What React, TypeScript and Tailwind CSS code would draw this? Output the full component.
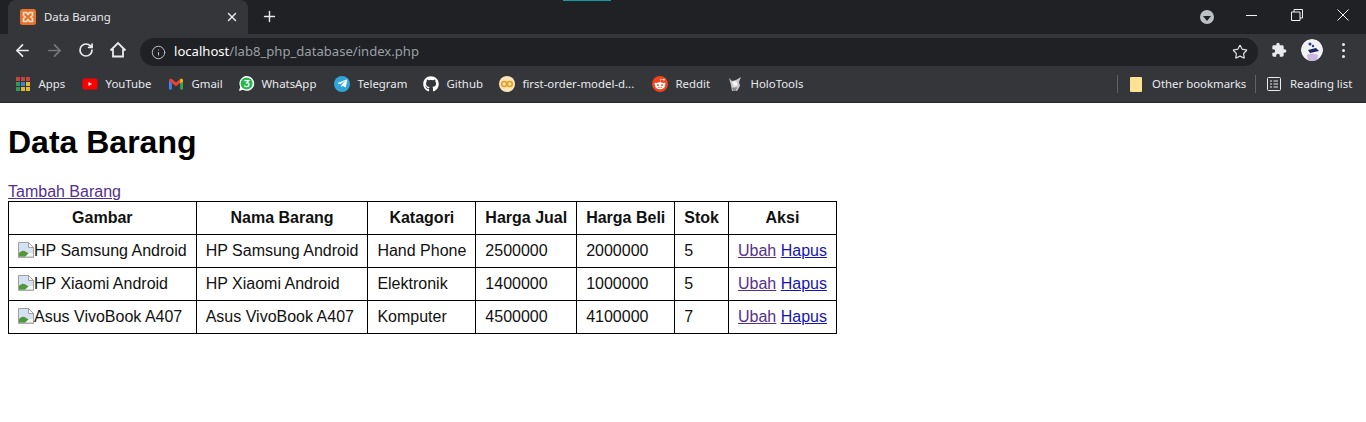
import { ArrowLeft, ArrowRight, Info, Plus, RotateCw, Star, X } from 'lucide-react';
import type { ReactNode } from 'react';
import { FaGithub, FaRedditAlien, FaTelegramPlane } from 'react-icons/fa';

const rows = [
  { name: 'HP Samsung Android', cat: 'Hand Phone', jual: '2500000', beli: '2000000', stok: '5' },
  { name: 'HP Xiaomi Android', cat: 'Elektronik', jual: '1400000', beli: '1000000', stok: '5' },
  { name: 'Asus VivoBook A407', cat: 'Komputer', jual: '4500000', beli: '4100000', stok: '7' },
];

const headers = ['Gambar', 'Nama Barang', 'Katagori', 'Harga Jual', 'Harga Beli', 'Stok', 'Aksi'];

function BrokenImage() {
  return (
    <svg width="16" height="16" viewBox="0 0 16 16" className="inline-block align-[-2px]">
      <path d="M0.5 0.5H10.5L15.5 5.5V15.5H0.5Z" fill="#d5e0f2" stroke="#a0a0a0" />
      <path d="M10.5 0.5V5.5H15.5Z" fill="#ffffff" stroke="#a0a0a0" />
      <path d="M1 15V11C3.5 8.5 5.5 8 7.5 9.5C9 10.5 10 11 11 11L7 15Z" fill="#4f9a38" />
      <path d="M7 15L11 11H15V15Z" fill="#f4f4f4" />
      <path d="M1 15H15" stroke="#b5b5b5" />
    </svg>
  );
}

function XamppIcon() {
  return (
    <svg width="16" height="16" viewBox="0 0 16 16" className="shrink-0">
      <rect width="16" height="16" rx="2.5" fill="#e8722c" />
      <path
        d="M3.5 3.5H6.5L8 5.5L9.5 3.5H12.5V6.5L10.8 8L12.5 9.5V12.5H9.5L8 10.5L6.5 12.5H3.5V9.5L5.2 8L3.5 6.5Z"
        fill="none"
        stroke="#fbe3d0"
        strokeWidth="1.6"
      />
    </svg>
  );
}

function AppsIcon() {
  const colors = ['#c5443c', '#c5443c', '#c5443c', '#2f9a5c', '#3b82d9', '#e5b72f', '#2f9a5c', '#e5b72f', '#e5b72f'];
  return (
    <div className="grid w-[14px] shrink-0 grid-cols-3 gap-px">
      {colors.map((c, i) => (
        <div key={i} className="h-[4px] w-[4px]" style={{ backgroundColor: c }} />
      ))}
    </div>
  );
}

function YoutubeIcon() {
  return (
    <svg width="16" height="12" viewBox="0 0 16 12" className="shrink-0">
      <rect width="15" height="11" x="0.5" y="0.5" rx="2.5" fill="#f00" />
      <path d="M6.5 4L10 6L6.5 8Z" fill="#fff" />
    </svg>
  );
}

function GmailIcon() {
  return (
    <svg width="16" height="16" viewBox="0 0 16 16" className="shrink-0">
      <path d="M1 4V13.5H3.8V7L1 4Z" fill="#4285f4" />
      <path d="M15 4V13.5H12.2V7L15 4Z" fill="#34a853" />
      <path d="M1 4.2C1 2.8 2.5 2.2 3.8 3L8 6.6L12.2 3V7L8 10.2L3.8 7Z" fill="#ea4335" />
      <path d="M12.2 3C13.5 2.2 15 2.8 15 4.2V5.5L12.2 7.5Z" fill="#fbbc04" />
    </svg>
  );
}

function WhatsappIcon() {
  return (
    <svg width="17" height="17" viewBox="0 0 17 17" className="shrink-0">
      <path d="M1 16L2.2 11.8A7.4 7.4 0 1 1 5 14.8Z" fill="#fff" />
      <circle cx="8.6" cy="8.4" r="6" fill="#25b94f" />
      <path
        d="M6.4 5.6H10.6L8.8 7.8C10.6 7.8 11 9 11 9.6C11 11 9.8 11.6 8.6 11.6C7.6 11.6 6.8 11.2 6.2 10.6"
        fill="none"
        stroke="#fff"
        strokeWidth="1.3"
      />
    </svg>
  );
}

function ColabIcon() {
  return (
    <svg width="16" height="16" viewBox="0 0 16 16" className="shrink-0">
      <circle cx="8" cy="8" r="8" fill="#fbe6ba" />
      <circle cx="5.2" cy="8" r="2.5" fill="none" stroke="#ea9a1c" strokeWidth="1.6" />
      <circle cx="10.8" cy="8" r="2.5" fill="none" stroke="#ea9a1c" strokeWidth="1.6" />
    </svg>
  );
}

function HoloIcon() {
  return (
    <svg width="16" height="16" viewBox="0 0 16 16" className="shrink-0">
      <path d="M2 2L5 5L9 4L14 1L12 6L13 10L10 15H5L4 9Z" fill="#c9c9c9" />
      <path d="M5 6L9 5L11 9L7 11Z" fill="#f2f2f2" />
      <path d="M5 12L10 11L9 15H6Z" fill="#8b8b8b" />
    </svg>
  );
}

function Bookmark({ w, icon, label }: { w: string; icon: ReactNode; label: string }) {
  return (
    <div className={`flex items-center gap-[7.5px] pl-2 whitespace-nowrap ${w}`}>
      <div className="flex w-4 shrink-0 items-center justify-center">{icon}</div>
      <span>{label}</span>
    </div>
  );
}

function Avatar() {
  return (
    <svg width="22" height="22" viewBox="0 0 22 22" className="rounded-full">
      <circle cx="11" cy="11" r="11" fill="#f1f1f4" />
      <path d="M6 16C9 14 13 14 17 16L16 22H7Z" fill="#c9b8e0" />
      <path d="M7 11L15 9L18 12L9 14Z" fill="#1c2466" />
      <circle cx="9" cy="5" r="1.5" fill="#2a3a86" />
      <circle cx="12" cy="7" r="1.2" fill="#2a3a86" />
    </svg>
  );
}

export default function App() {
  return (
    <div className="relative min-h-screen bg-white">
      <div className="font-['Noto_Sans',sans-serif] text-[11.4px] text-[#e8eaed]">
        {/* tab strip */}
        <div className="relative flex h-[34px] items-end bg-[#202124]">
          <div className="absolute top-0 left-[563px] h-px w-12 bg-[#0f9d9d]" />
          <div className="ml-2 flex h-[34px] w-[240px] items-center rounded-t-lg bg-[#35363a] pl-3 pr-[9px]">
            <XamppIcon />
            <span className="ml-2 flex-1 text-[#e8eaed]">Data Barang</span>
            <X size={14} strokeWidth={2.4} />
          </div>
          <Plus size={17} strokeWidth={2} className="mb-[9px] ml-[13px] text-[#e8eaed]" />
          <div className="flex-1" />
          <div className="mb-[10px] mr-[14px] flex h-[14px] w-[14px] items-center justify-center rounded-full bg-[#bdc1c6]">
            <div className="mt-0.5 border-x-[4px] border-t-[5px] border-x-transparent border-t-[#202124]" />
          </div>
          <div className="flex h-[34px] w-[46px] items-center justify-center pb-[4px]">
            <svg width="11" height="11" viewBox="0 0 11 11" stroke="#f1f3f4">
              <path d="M0 5.5H11" />
            </svg>
          </div>
          <div className="flex h-[34px] w-[46px] items-center justify-center pb-[4px]">
            <svg width="12" height="12" viewBox="0 0 12 12" fill="none" stroke="#f1f3f4">
              <path d="M0.5 3H9V11.5H0.5Z" />
              <path d="M3 3V0.5H11.5V9H9" />
            </svg>
          </div>
          <div className="flex h-[34px] w-[46px] items-center justify-center pb-[4px]">
            <svg width="12" height="12" viewBox="0 0 12 12" fill="none" stroke="#f1f3f4">
              <path d="M0.5 0.5L11.5 11.5M11.5 0.5L0.5 11.5" />
            </svg>
          </div>
        </div>

        {/* toolbar */}
        <div className="flex h-[32px] items-center bg-[#35363a] pl-[6px]">
          <div className="flex w-8 justify-center"><ArrowLeft size={19} strokeWidth={2.2} /></div>
          <div className="flex w-8 justify-center text-[#75787c]"><ArrowRight size={19} strokeWidth={2.2} /></div>
          <div className="flex w-8 justify-center"><RotateCw size={16} strokeWidth={2.6} /></div>
          <div className="flex w-8 justify-center">
            <svg width="18" height="18" viewBox="0 0 18 18" fill="none" stroke="#e8eaed" strokeWidth="1.8">
              <path d="M1.5 9.5L9 2L16.5 9.5M4 8V15.5H14V8" />
            </svg>
          </div>
          <div className="mt-[4px] ml-[6px] flex h-[28px] w-[1118px] items-center rounded-full bg-[#202124] pl-[11px] pr-[10px]">
            <Info size={15} strokeWidth={1.6} className="text-[#bdc1c6]" />
            <div className="ml-[8px] flex-1 text-[13.1px]">
              <span className="text-white">localhost</span>
              <span className="text-[#9aa0a6]">/lab8_php_database/index.php</span>
            </div>
            <Star size={16} strokeWidth={1.8} className="text-[#dadce0]" />
          </div>
          <div className="ml-[13px] flex w-4 justify-center">
            <svg width="16" height="16" viewBox="0 0 24 24" fill="#e8eaed">
              <path d="M20.5 11H19V7c0-1.1-.9-2-2-2h-4V3.5C13 2.12 11.88 1 10.5 1S8 2.12 8 3.5V5H4c-1.1 0-1.99.9-1.99 2v3.8H3.5c1.49 0 2.7 1.21 2.7 2.7s-1.21 2.7-2.7 2.7H2V20c0 1.1.9 2 2 2h3.8v-1.5c0-1.49 1.21-2.7 2.7-2.7 1.49 0 2.7 1.21 2.7 2.7V22H17c1.1 0 2-.9 2-2v-4h1.5c1.38 0 2.5-1.12 2.5-2.5S21.88 11 20.5 11z" />
            </svg>
          </div>
          <div className="ml-[14px]"><Avatar /></div>
          <div className="ml-[19px] flex flex-col gap-[3px]">
            <div className="h-[3px] w-[3px] rounded-full bg-[#e8eaed]" />
            <div className="h-[3px] w-[3px] rounded-full bg-[#e8eaed]" />
            <div className="h-[3px] w-[3px] rounded-full bg-[#e8eaed]" />
          </div>
        </div>

        {/* bookmarks bar */}
        <div className="flex h-[37px] items-center border-b border-[#26272a] bg-[#35363a] pl-[7px]">
          <Bookmark w="w-[67px]" icon={<AppsIcon />} label="Apps" />
          <Bookmark w="w-[86px]" icon={<YoutubeIcon />} label="YouTube" />
          <Bookmark w="w-[70px]" icon={<GmailIcon />} label="Gmail" />
          <Bookmark w="w-[96px]" icon={<WhatsappIcon />} label="WhatsApp" />
          <Bookmark
            w="w-[89px]"
            icon={
              <div className="flex h-4 w-4 items-center justify-center rounded-full bg-[#2fa5dc]">
                <FaTelegramPlane size={11} className="text-white" />
              </div>
            }
            label="Telegram"
          />
          <Bookmark w="w-[76px]" icon={<FaGithub size={16} className="text-white" />} label="Github" />
          <Bookmark w="w-[153px]" icon={<ColabIcon />} label="first-order-model-d..." />
          <Bookmark
            w="w-[75px]"
            icon={
              <div className="flex h-4 w-4 items-center justify-center rounded-full bg-[#f0431e]">
                <FaRedditAlien size={12} className="text-white" />
              </div>
            }
            label="Reddit"
          />
          <Bookmark w="w-[93px]" icon={<HoloIcon />} label="HoloTools" />
          <div className="flex-1" />
          <div className="h-[18px] w-px bg-[#5f6368]" />
          <div className="ml-[12px] h-[15px] w-[12px] rounded-[1px] bg-[#fde293]" />
          <span className="ml-[10px] w-[93px] whitespace-nowrap">Other bookmarks</span>
          <div className="ml-[10px] h-[18px] w-px bg-[#5f6368]" />
          <svg width="14" height="14" viewBox="0 0 14 14" fill="none" stroke="#e8eaed" className="ml-[11px]">
            <rect x="0.5" y="0.5" width="13" height="13" rx="1" />
            <path d="M3 4H5M3 7H5M3 10H5M6.5 4H11M6.5 7H11M6.5 10H11" />
          </svg>
          <span className="mr-[15px] ml-[9px] w-[61px] whitespace-nowrap">Reading list</span>
        </div>
      </div>

      {/* page content */}
      <div className="px-2 font-['Liberation_Sans',sans-serif] text-base text-[#111]">
        <h1 className="pt-[21px] pb-[22px] text-[32px] leading-[37px] font-bold text-black">Data Barang</h1>
        <a className="block leading-[18px] text-[#55308d] underline" href="#tambah">Tambah Barang</a>
        <table className="border-collapse border border-black leading-[18px]">
          <thead>
            <tr>
              {headers.map((h) => (
                <th key={h} className="border border-black px-[9px] py-[7px] text-center font-bold">{h}</th>
              ))}
            </tr>
          </thead>
          <tbody>
            {rows.map((r) => (
              <tr key={r.name}>
                <td className="border border-black px-[9px] py-[7px] whitespace-nowrap">
                  <BrokenImage />
                  {r.name}
                </td>
                <td className="border border-black px-[9px] py-[7px] whitespace-nowrap">{r.name}</td>
                <td className="border border-black px-[9px] py-[7px] whitespace-nowrap">{r.cat}</td>
                <td className="border border-black px-[9px] py-[7px]">{r.jual}</td>
                <td className="border border-black px-[9px] py-[7px]">{r.beli}</td>
                <td className="border border-black px-[9px] py-[7px]">{r.stok}</td>
                <td className="border border-black px-[9px] py-[7px] whitespace-nowrap">
                  <a className="text-[#55308d] underline" href="#ubah">Ubah</a>{' '}
                  <a className="text-[#1414b4] underline" href="#hapus">Hapus</a>
                </td>
              </tr>
            ))}
          </tbody>
        </table>
      </div>
    </div>
  );
}
